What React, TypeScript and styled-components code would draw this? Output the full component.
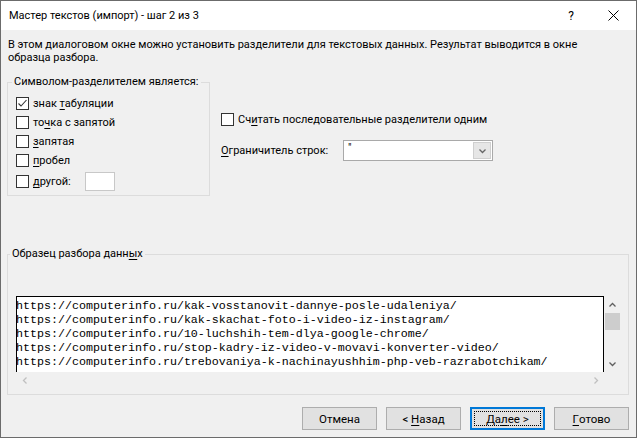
import React from 'react';
import styled, { createGlobalStyle } from 'styled-components';

const Global = createGlobalStyle`
  html, body { margin: 0; padding: 0; background: #f0f0f0; }
  body {
    font-family: Roboto, "Noto Sans", sans-serif;
    font-size: 11px;
    color: #000;
  }
`;

const Window = styled.div`
  width: 637px;
  height: 438px;
  box-sizing: border-box;
  border: 1px solid #6b6b6b;
  background: #f0f0f0;
  display: flex;
  flex-direction: column;
  overflow: hidden;
`;

const TitleBar = styled.div`
  height: 29px;
  flex: none;
  background: #fff;
  display: flex;
  align-items: center;
  padding-left: 8px;
`;

const Title = styled.div`
  flex: 1;
  font-size: 11px;
  white-space: nowrap;
`;

const CaptionButton = styled.div<{ $w: number }>`
  width: ${(p) => p.$w}px;
  height: 29px;
  display: flex;
  align-items: center;
  justify-content: center;
  font-size: 12px;
`;

const Body = styled.div`
  flex: 1;
  display: flex;
  flex-direction: column;
  padding: 8px 7px 0 6px;
`;

const Description = styled.p`
  margin: 0 0 0 1px;
  line-height: 13px;
  font-size: 11px;
  white-space: nowrap;
`;

const TopRow = styled.div`
  display: flex;
  align-items: flex-start;
  margin-top: 11px;
`;

const GroupBox = styled.fieldset<{ $w: number; $h: number }>`
  margin: 0;
  padding: 0;
  box-sizing: border-box;
  width: ${(p) => p.$w}px;
  height: ${(p) => p.$h}px;
  min-width: 0;
  border: 1px solid #dcdcdc;
  flex: none;
`;

const Legend = styled.legend<{ $offset: number }>`
  margin-left: ${(p) => p.$offset}px;
  padding: 0 2px;
  line-height: 14px;
  font-size: 11px;
  white-space: nowrap;
`;

const OptionList = styled.div`
  display: flex;
  flex-direction: column;
  margin-top: 5px;
  padding-left: 8px;
`;

const OptionRow = styled.label<{ $h?: number }>`
  display: flex;
  align-items: center;
  gap: 4px;
  height: ${(p) => p.$h ?? 19}px;
  white-space: nowrap;
`;

const Box = styled.span`
  width: 13px;
  height: 13px;
  box-sizing: border-box;
  border: 1px solid #333;
  background: #fff;
  flex: none;
  display: flex;
  align-items: center;
  justify-content: center;
`;

const Key = styled.span`
  text-decoration: underline;
  text-underline-offset: 2px;
`;

const FixedLabel = styled.span<{ $w: number }>`
  display: inline-block;
  width: ${(p) => p.$w}px;
  flex: none;
`;

const SmallInput = styled.div`
  width: 30px;
  height: 19px;
  box-sizing: border-box;
  border: 1px solid #c8c8c8;
  background: #fff;
  margin-left: -4px;
`;

const Side = styled.div`
  display: flex;
  flex-direction: column;
  margin-left: 11px;
  padding-top: 35px;
`;

const FieldRow = styled.div`
  display: flex;
  align-items: center;
  margin-top: 11px;
  height: 21px;
`;

const Combo = styled.div`
  width: 150px;
  height: 21px;
  box-sizing: border-box;
  border: 1px solid #a9a9a9;
  background: #fff;
  display: flex;
  align-items: stretch;
  margin-left: -1px;
`;

const ComboValue = styled.div`
  flex: 1;
  padding: 0 0 0 4px;
  line-height: 14px;
  font-size: 11px;
`;

const ComboButton = styled.div`
  width: 16px;
  margin: 1px;
  background: #e6e6e6;
  border: 1px solid #cfcfcf;
  display: flex;
  align-items: center;
  justify-content: center;
`;

const PreviewGroup = styled(GroupBox)`
  margin-top: 51px;
`;

const PreviewGrid = styled.div`
  display: grid;
  grid-template-columns: 588px 17px;
  grid-template-rows: 76px 17px;
  margin: 35px 0 0 8px;
`;

const PreviewText = styled.div`
  box-sizing: border-box;
  border: 1px solid #000;
  border-bottom: none;
  background: #fff;
  overflow: hidden;
  padding-top: 2px;
  font-family: "Liberation Mono", "Courier New", monospace;
  font-size: 11.67px;
  line-height: 14px;
  white-space: pre;
  color: #000;
`;

const Line = styled.div`
  margin-left: -1px;
`;

const VScroll = styled.div`
  display: flex;
  flex-direction: column;
  background: #f0f0f0;
`;

const ArrowCell = styled.div`
  width: 17px;
  height: 17px;
  flex: none;
  display: flex;
  align-items: center;
  justify-content: center;
`;

const Thumb = styled.div`
  height: 17px;
  margin: 0 1px;
  background: #cdcdcd;
  flex: none;
`;

const Spacer = styled.div`
  flex: 1;
`;

const HScroll = styled.div`
  display: flex;
  background: #f0f0f0;
`;

const Buttons = styled.div`
  display: flex;
  justify-content: flex-end;
  gap: 9px;
  margin-top: 12px;
`;

const Button = styled.div<{ $default?: boolean }>`
  width: 75px;
  height: 23px;
  box-sizing: border-box;
  background: #e1e1e1;
  border: ${(p) => (p.$default ? '2px solid #0078d7' : '1px solid #adadad')};
  display: flex;
  align-items: center;
  justify-content: center;
  font-size: 11.5px;
  white-space: pre;
  position: relative;
`;

const FocusRing = styled.span`
  position: absolute;
  inset: 2px;
  border: 1px dotted #000;
  pointer-events: none;
`;

const Chevron = ({ dir, color }: { dir: 'up' | 'down' | 'left' | 'right'; color: string }) => {
  const pts: Record<string, string> = {
    up: '0.5,4.5 3.5,1.5 6.5,4.5',
    down: '0.5,1.5 3.5,4.5 6.5,1.5',
    left: '4.5,0.5 1.5,3.5 4.5,6.5',
    right: '1.5,0.5 4.5,3.5 1.5,6.5',
  };
  const vertical = dir === 'up' || dir === 'down';
  return (
    <svg width={vertical ? 7 : 6} height={vertical ? 6 : 7} viewBox={vertical ? '0 0 7 6' : '0 0 6 7'}>
      <polyline points={pts[dir]} fill="none" stroke={color} strokeWidth="1.3" />
    </svg>
  );
};

const CheckBox = ({ checked }: { checked?: boolean }) => (
  <Box>
    {checked && (
      <svg width="11" height="11" viewBox="0 0 11 11">
        <polyline points="1.5,5.5 4,8 9.5,2" fill="none" stroke="#333" strokeWidth="1.1" />
      </svg>
    )}
  </Box>
);

const lines = [
  'https://computerinfo.ru/kak-vosstanovit-dannye-posle-udaleniya/',
  'https://computerinfo.ru/kak-skachat-foto-i-video-iz-instagram/',
  'https://computerinfo.ru/10-luchshih-tem-dlya-google-chrome/',
  'https://computerinfo.ru/stop-kadry-iz-video-v-movavi-konverter-video/',
  'https://computerinfo.ru/trebovaniya-k-nachinayushhim-php-veb-razrabotchikam/',
];

export default function App() {
  return (
    <>
      <Global />
      <Window>
        <TitleBar>
          <Title>Мастер текстов (импорт) - шаг 2 из 3</Title>
          <CaptionButton $w={38}>?</CaptionButton>
          <CaptionButton $w={46}>
            <svg width="11" height="11" viewBox="0 0 11 11">
              <path d="M0.5 0.5 L10.5 10.5 M10.5 0.5 L0.5 10.5" stroke="#000" strokeWidth="1" fill="none" />
            </svg>
          </CaptionButton>
        </TitleBar>
        <Body>
          <Description>
            В этом диалоговом окне можно установить разделители для текстовых данных. Результат выводится в окне
            <br />
            образца разбора.
          </Description>
          <TopRow>
            <GroupBox $w={203} $h={121}>
              <Legend $offset={4}>Символом-разделителем является:</Legend>
              <OptionList>
                <OptionRow>
                  <CheckBox checked />
                  <span>
                    знак <Key>т</Key>абуляции
                  </span>
                </OptionRow>
                <OptionRow>
                  <CheckBox />
                  <span>
                    то<Key>ч</Key>ка с запятой
                  </span>
                </OptionRow>
                <OptionRow>
                  <CheckBox />
                  <span>
                    <Key>з</Key>апятая
                  </span>
                </OptionRow>
                <OptionRow>
                  <CheckBox />
                  <span>
                    <Key>п</Key>робел
                  </span>
                </OptionRow>
                <OptionRow $h={22}>
                  <CheckBox />
                  <FixedLabel $w={52}>
                    <Key>д</Key>ругой:
                  </FixedLabel>
                  <SmallInput />
                </OptionRow>
              </OptionList>
            </GroupBox>
            <Side>
              <OptionRow>
                <CheckBox />
                <span>
                  Сч<Key>и</Key>тать последовательные разделители одним
                </span>
              </OptionRow>
              <FieldRow>
                <FixedLabel $w={123}>
                  <Key>О</Key>граничитель строк:
                </FixedLabel>
                <Combo>
                  <ComboValue>"</ComboValue>
                  <ComboButton>
                    <Chevron dir="down" color="#666" />
                  </ComboButton>
                </Combo>
              </FieldRow>
            </Side>
          </TopRow>
          <PreviewGroup $w={622} $h={148}>
            <Legend $offset={2}>
              Образец разбора данн<Key>ы</Key>х
            </Legend>
            <PreviewGrid>
              <PreviewText>
                {lines.map((l) => (
                  <Line key={l}>{l}</Line>
                ))}
              </PreviewText>
              <VScroll>
                <ArrowCell>
                  <Chevron dir="up" color="#606060" />
                </ArrowCell>
                <Thumb />
                <Spacer />
                <ArrowCell>
                  <Chevron dir="down" color="#606060" />
                </ArrowCell>
              </VScroll>
              <HScroll>
                <ArrowCell>
                  <Chevron dir="left" color="#c0c0c0" />
                </ArrowCell>
                <Spacer />
                <ArrowCell>
                  <Chevron dir="right" color="#c0c0c0" />
                </ArrowCell>
              </HScroll>
            </PreviewGrid>
          </PreviewGroup>
          <Buttons>
            <Button>Отмена</Button>
            <Button>
              &lt; <Key>Н</Key>азад
            </Button>
            <Button $default>
              <FocusRing />
              Да<Key>л</Key>ее &gt;
            </Button>
            <Button>
              <Key>Г</Key>отово
            </Button>
          </Buttons>
        </Body>
      </Window>
    </>
  );
}
